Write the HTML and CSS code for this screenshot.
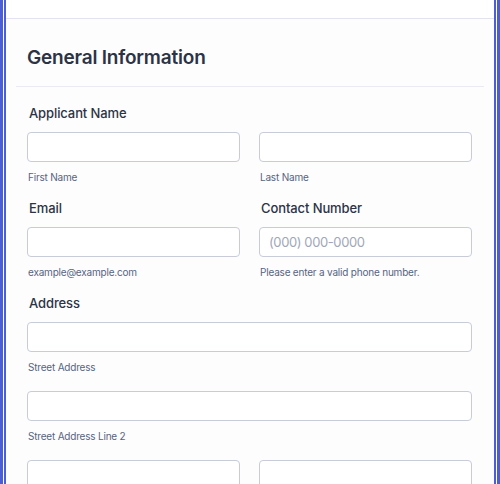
FILE: index.html
```html
<!DOCTYPE html>
<html lang="en">
<head>
  <meta charset="UTF-8" />
  <meta name="viewport" content="width=device-width, initial-scale=1.0"/>
  <title>General Information</title>
  <link rel="stylesheet" href="styles.css">
</head>
<body>

  <div class="frame">
    <div class="frame-inner">
      <div class="prev-section"></div>

      <div class="section">
        <div class="section-header">
          <h2>General Information</h2>
        </div>

        <div class="fields">
          <div class="field">
            <label class="field-label">Applicant Name</label>
            <div class="row">
              <div class="sub">
                <input type="text">
                <span class="hint">First Name</span>
              </div>
              <div class="sub">
                <input type="text">
                <span class="hint">Last Name</span>
              </div>
            </div>
          </div>

          <div class="row">
            <div class="field">
              <label class="field-label">Email</label>
              <input type="email">
              <span class="hint">example@example.com</span>
            </div>
            <div class="field">
              <label class="field-label">Contact Number</label>
              <input type="tel" placeholder="(000) 000-0000">
              <span class="hint">Please enter a valid phone number.</span>
            </div>
          </div>

          <div class="field">
            <label class="field-label">Address</label>
            <div class="sub">
              <input type="text">
              <span class="hint">Street Address</span>
            </div>
            <div class="sub spaced">
              <input type="text">
              <span class="hint">Street Address Line 2</span>
            </div>
            <div class="row spaced">
              <div class="sub">
                <input type="text">
              </div>
              <div class="sub">
                <input type="text">
              </div>
            </div>
          </div>
        </div>
      </div>
    </div>
  </div>

</body>
</html>
```

FILE: styles.css
```css
body {
  margin: 0;
  font-family: Inter, "Noto Sans", sans-serif;
  background-color: #fff;
  color: #2c3345;
}

.frame {
  height: 100vh;
  box-sizing: border-box;
  border-left: 3px solid #4c5ed6;
  border-right: 3px solid #4c5ed6;
  padding: 0 1px;
  overflow: hidden;
}

.frame-inner {
  height: 100%;
  border-left: 2px solid #4c5ed6;
  border-right: 2px solid #4c5ed6;
  background-color: #fdfdfe;
}

.prev-section {
  height: 18px;
  background-color: #fff;
  border-bottom: 1px solid #e1e3ee;
}

.section {
  padding: 0 10px;
}

.section-header {
  padding: 27px 11px 16px;
  border-bottom: 1px solid #eaebf2;
}

.section-header h2 {
  margin: 0;
  font-size: 19px;
  line-height: 24px;
  font-weight: 600;
  letter-spacing: -0.2px;
}

.fields {
  padding: 16px 12px 0 11px;
}

.row {
  display: grid;
  grid-template-columns: minmax(0, 1fr) minmax(0, 1fr);
  column-gap: 19px;
}

.field,
.sub {
  display: flex;
  flex-direction: column;
  min-width: 0;
}

.field {
  margin-bottom: 13px;
}

.field-label {
  font-size: 13px;
  line-height: 20px;
  font-weight: 500;
  letter-spacing: -0.1px;
  margin: 0 0 9px 2px;
}

.field input,
.sub input {
  width: 100%;
  min-width: 0;
  height: 30px;
  box-sizing: border-box;
  border: 1px solid #c8ccd9;
  border-radius: 4px;
  background: #fff;
  padding: 0 9px;
  font-family: inherit;
  font-size: 13px;
  letter-spacing: -0.4px;
  color: #2c3345;
}

.field input::placeholder {
  color: #a0a7b8;
}

.hint {
  margin: 7px 0 0 1px;
  font-size: 10px;
  line-height: 16px;
  letter-spacing: -0.2px;
  color: #57647e;
}

.spaced {
  margin-top: 16px;
}
```
